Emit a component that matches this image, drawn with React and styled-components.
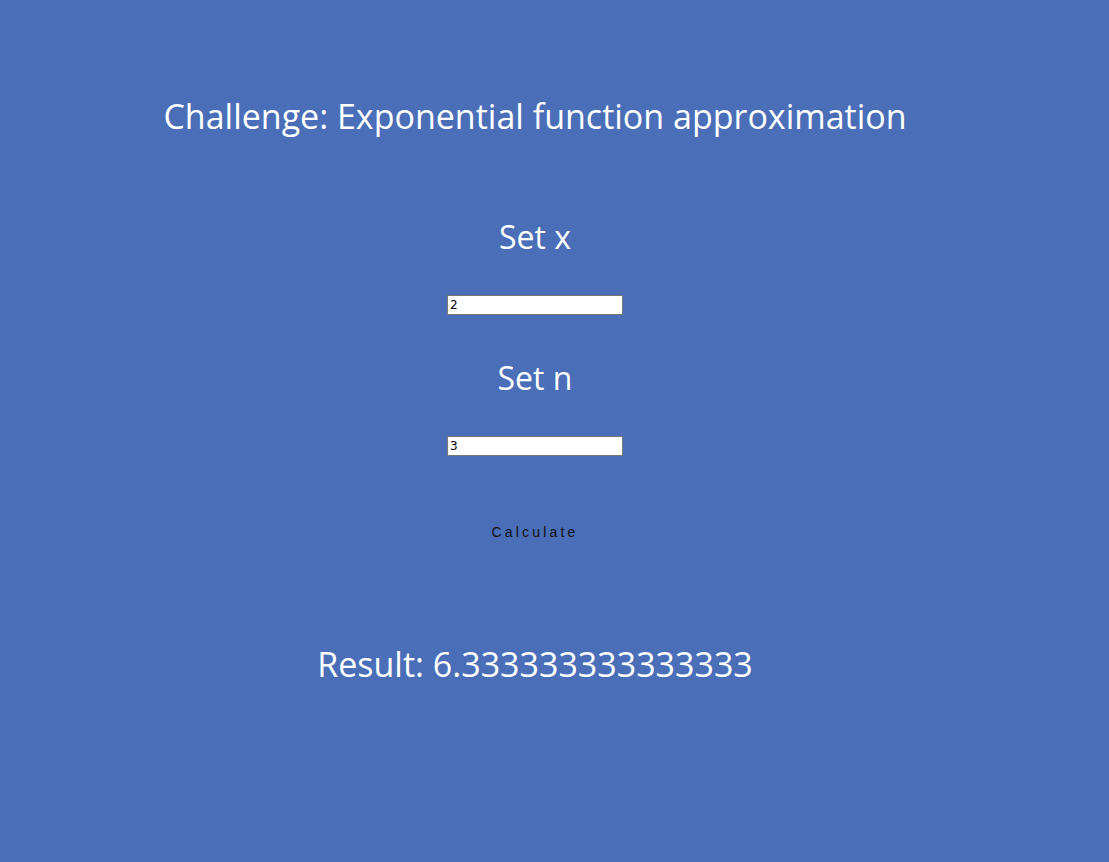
import React, { useState } from "react";
import styled, { createGlobalStyle } from "styled-components";

const GlobalStyle = createGlobalStyle`
  html, body {
    margin: 0;
    padding: 0;
    background: #4a6eb7;
  }
`;

const Page = styled.div`
  width: 1070px;
  min-height: 862px;
  display: flex;
  flex-direction: column;
  align-items: center;
  font-family: "Open Sans", "Noto Sans", sans-serif;
  color: #ffffff;
`;

const Title = styled.h1`
  margin: 94px 0 0;
  font-size: 34px;
  font-weight: 400;
  line-height: 44px;
`;

const Label = styled.h2`
  margin: ${(props) => props.top}px 0 0;
  font-size: 32px;
  font-weight: 400;
  line-height: 40px;
`;

const NumberInput = styled.input`
  margin-top: 38px;
  width: 176px;
  height: 20px;
  box-sizing: border-box;
  border: 1px solid #767676;
  padding: 0 2px;
  font-family: "DejaVu Sans", sans-serif;
  font-size: 12px;
  color: #000;
  background: #fff;
  outline: none;
`;

const Button = styled.button`
  margin-top: 68px;
  background: transparent;
  border: none;
  padding: 0;
  font-family: "Liberation Sans", Arial, sans-serif;
  font-size: 14px;
  letter-spacing: 3.2px;
  color: #111;
  cursor: pointer;
`;

const Result = styled.div`
  margin-top: 102px;
  font-size: 34px;
  line-height: 44px;
`;

function approx(x, n) {
  let sum = 0;
  let term = 1;
  for (let i = 0; i < n; i++) {
    if (i > 0) term = (term * x) / i;
    sum += term;
  }
  return sum;
}

export default function App() {
  const [x, setX] = useState("2");
  const [n, setN] = useState("3");
  const [result, setResult] = useState("6.333333333333333");

  return (
    <>
      <GlobalStyle />
      <Page>
        <Title>Challenge: Exponential function approximation</Title>
        <Label top={79}>Set x</Label>
        <NumberInput value={x} onChange={(e) => setX(e.target.value)} />
        <Label top={43}>Set n</Label>
        <NumberInput value={n} onChange={(e) => setN(e.target.value)} />
        <Button onClick={() => setResult(String(approx(Number(x), Number(n))))}>
          Calculate
        </Button>
        <Result>Result: {result}</Result>
      </Page>
    </>
  );
}
